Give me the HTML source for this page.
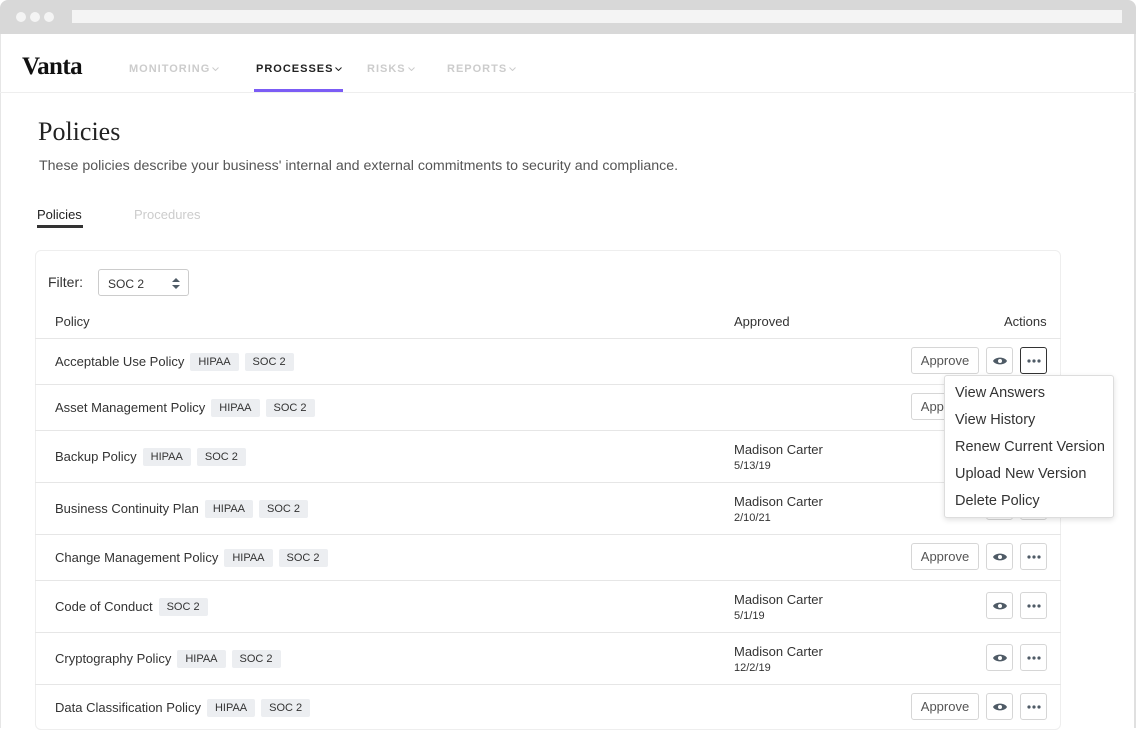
<!DOCTYPE html>
<html><head><style>
*{box-sizing:border-box;margin:0;padding:0}
body{width:1136px;height:728px;overflow:hidden;background:#fff;font-family:"Liberation Sans",sans-serif;color:#333;position:relative}
.chrome{position:absolute;left:0;top:0;width:1136px;height:34px;background:#d8d8d8;border-radius:8px 8px 0 0}
.dot{position:absolute;top:12px;width:10px;height:10px;border-radius:50%;background:#f4f4f4}
.url{position:absolute;left:72px;top:10px;width:1050px;height:13px;background:#f4f4f4}
.frame{position:absolute;left:0;top:34px;width:1136px;height:694px;border-left:1px solid #e6e6e6;border-right:2px solid #e0e0e0}
.nav{position:absolute;left:0;top:34px;width:1136px;height:59px;border-bottom:1px solid #eee}
.logo{position:absolute;left:22px;top:53px;font-family:"Liberation Serif",serif;font-weight:bold;font-size:25px;color:#111;letter-spacing:-0.6px}
.ni{position:absolute;top:63px;font-size:11px;font-weight:bold;letter-spacing:1px;color:#ccc}
.ni.a{color:#222}
.ni svg{margin-left:2px;vertical-align:1px}
.ul{position:absolute;left:254px;top:89px;width:89px;height:3px;background:#7b5cf5}
h1{position:absolute;left:38px;top:117px;font-family:"Liberation Serif",serif;font-weight:normal;font-size:26px;color:#222}
.desc{position:absolute;left:39px;top:158px;font-size:14.2px;color:#555}
.tab{position:absolute;top:207px;font-size:13px}
.card{position:absolute;left:35px;top:250px;width:1026px;height:480px;border:1px solid #eee;border-radius:6px}
.flt{position:absolute;left:48px;top:274px;font-size:14px;color:#333}
.sel{position:absolute;left:98px;top:269px;width:91px;height:27px;border:1px solid #ccc;border-radius:3px;font-size:12px;padding:7px 0 0 9px}
.th{position:absolute;top:314px;font-size:13px;color:#333}
.line{position:absolute;left:35px;width:1026px;height:1px;background:#e6e6e6}
.name{position:absolute;left:55px;font-size:13px;color:#333;white-space:nowrap}
.tag{display:inline-block;background:#eceef1;border-radius:2px;font-size:11px;padding:3px 8px;margin-left:6px;color:#333;vertical-align:1px}
.who{position:absolute;left:734px;font-size:13px;color:#333}
.who small{display:block;font-size:11px;margin-top:3px}
.btn{position:absolute;height:27px;border:1px solid #d6d6d6;border-radius:3px;background:#fff;font-size:13px;color:#555;display:flex;align-items:center;justify-content:center}
.btn svg{display:block}
.ap{left:911px;width:68px}
.ey{left:986px;width:27px}
.dt{left:1020px;width:27px}
.menu{position:absolute;left:944px;top:375px;width:170px;height:143px;background:#fff;border:1px solid #ddd;border-radius:3px;box-shadow:0 2px 6px rgba(0,0,0,.12)}
.menu div{position:absolute;left:10px;font-size:14.5px;color:#333;white-space:nowrap}
</style></head><body>
<div class="chrome"><div class="dot" style="left:16px"></div><div class="dot" style="left:30px"></div><div class="dot" style="left:44px"></div><div class="url"></div></div>
<div class="frame"></div>
<div class="nav"></div>
<div class="logo">Vanta</div>
<svg width="0" height="0" style="position:absolute"><defs>
<symbol id="chv" viewBox="0 0 7 4"><path d="M0.5 0.5L3.5 3.5L6.5 0.5" fill="none" stroke="currentColor" stroke-width="1"/></symbol>
<symbol id="eye" viewBox="0 0 14 10"><path d="M0 5C2 0.5 12 0.5 14 5C12 9.5 2 9.5 0 5Z" fill="#4f5b66"/><circle cx="7" cy="5" r="2" fill="#fff"/></symbol>
<symbol id="dots" viewBox="0 0 14 4"><circle cx="2" cy="2" r="1.6" fill="#4f5b66"/><circle cx="7" cy="2" r="1.6" fill="#4f5b66"/><circle cx="12" cy="2" r="1.6" fill="#4f5b66"/></symbol>
</defs></svg>
<div class="ni" style="left:129px">MONITORING<svg width="7" height="4"><use href="#chv"/></svg></div>
<div class="ni a" style="left:256px">PROCESSES<svg width="7" height="4"><use href="#chv"/></svg></div>
<div class="ni" style="left:367px">RISKS<svg width="7" height="4"><use href="#chv"/></svg></div>
<div class="ni" style="left:447px">REPORTS<svg width="7" height="4"><use href="#chv"/></svg></div>
<div class="ul"></div>
<h1>Policies</h1>
<div class="desc">These policies describe your business' internal and external commitments to security and compliance.</div>
<div class="tab" style="left:37px;color:#222">Policies</div>
<div style="position:absolute;left:37px;top:225px;width:46px;height:3px;background:#333"></div>
<div class="tab" style="left:134px;color:#ccc">Procedures</div>
<div class="card"></div>
<div class="flt">Filter:</div>
<div class="sel">SOC 2<svg style="position:absolute;right:8px;top:8px" width="8" height="11"><path d="M0 4L4 0L8 4Z M0 7L4 11L8 7Z" fill="#4f5b66"/></svg></div>
<div class="th" style="left:55px">Policy</div>
<div class="th" style="left:734px">Approved</div>
<div class="th" style="left:1004px">Actions</div>

<div class="line" style="top:338px"></div>
<div class="name" style="top:353px">Acceptable Use Policy<span class="tag">HIPAA</span><span class="tag">SOC 2</span></div>
<div class="btn ap" style="top:347px">Approve</div>
<div class="btn ey" style="top:347px"><svg width="14" height="10"><use href="#eye"/></svg></div>
<div class="btn dt" style="top:347px;border-color:#333"><svg width="14" height="4"><use href="#dots"/></svg></div>

<div class="line" style="top:384px"></div>
<div class="name" style="top:399px">Asset Management Policy<span class="tag">HIPAA</span><span class="tag">SOC 2</span></div>
<div class="btn ap" style="top:393px">Approve</div>

<div class="line" style="top:430px"></div>
<div class="name" style="top:448px">Backup Policy<span class="tag">HIPAA</span><span class="tag">SOC 2</span></div>
<div class="who" style="top:442px">Madison Carter<small>5/13/19</small></div>

<div class="line" style="top:482px"></div>
<div class="name" style="top:500px">Business Continuity Plan<span class="tag">HIPAA</span><span class="tag">SOC 2</span></div>
<div class="who" style="top:494px">Madison Carter<small>2/10/21</small></div>
<div class="btn ey" style="top:493px"></div><div class="btn dt" style="top:493px"></div>

<div class="line" style="top:534px"></div>
<div class="name" style="top:549px">Change Management Policy<span class="tag">HIPAA</span><span class="tag">SOC 2</span></div>
<div class="btn ap" style="top:543px">Approve</div>
<div class="btn ey" style="top:543px"><svg width="14" height="10"><use href="#eye"/></svg></div>
<div class="btn dt" style="top:543px"><svg width="14" height="4"><use href="#dots"/></svg></div>

<div class="line" style="top:580px"></div>
<div class="name" style="top:598px">Code of Conduct<span class="tag">SOC 2</span></div>
<div class="who" style="top:592px">Madison Carter<small>5/1/19</small></div>
<div class="btn ey" style="top:592px"><svg width="14" height="10"><use href="#eye"/></svg></div>
<div class="btn dt" style="top:592px"><svg width="14" height="4"><use href="#dots"/></svg></div>

<div class="line" style="top:632px"></div>
<div class="name" style="top:650px">Cryptography Policy<span class="tag">HIPAA</span><span class="tag">SOC 2</span></div>
<div class="who" style="top:644px">Madison Carter<small>12/2/19</small></div>
<div class="btn ey" style="top:644px"><svg width="14" height="10"><use href="#eye"/></svg></div>
<div class="btn dt" style="top:644px"><svg width="14" height="4"><use href="#dots"/></svg></div>

<div class="line" style="top:684px"></div>
<div class="name" style="top:699px">Data Classification Policy<span class="tag">HIPAA</span><span class="tag">SOC 2</span></div>
<div class="btn ap" style="top:693px">Approve</div>
<div class="btn ey" style="top:693px"><svg width="14" height="10"><use href="#eye"/></svg></div>
<div class="btn dt" style="top:693px"><svg width="14" height="4"><use href="#dots"/></svg></div>

<div class="menu">
<div style="top:9px">View Answers</div>
<div style="top:36px">View History</div>
<div style="top:63px">Renew Current Version</div>
<div style="top:90px">Upload New Version</div>
<div style="top:117px">Delete Policy</div>
</div>
</body></html>
